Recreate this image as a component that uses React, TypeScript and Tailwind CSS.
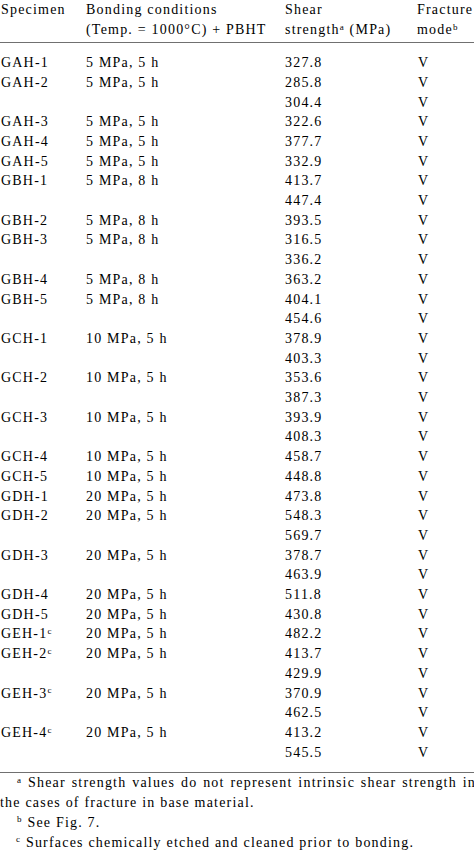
import React from 'react';

type Row = { spec?: string; note?: boolean; cond?: string; shear: string };

const rows: Row[] = [
  { spec: 'GAH-1', cond: '5 MPa, 5 h', shear: '327.8' },
  { spec: 'GAH-2', cond: '5 MPa, 5 h', shear: '285.8' },
  { shear: '304.4' },
  { spec: 'GAH-3', cond: '5 MPa, 5 h', shear: '322.6' },
  { spec: 'GAH-4', cond: '5 MPa, 5 h', shear: '377.7' },
  { spec: 'GAH-5', cond: '5 MPa, 5 h', shear: '332.9' },
  { spec: 'GBH-1', cond: '5 MPa, 8 h', shear: '413.7' },
  { shear: '447.4' },
  { spec: 'GBH-2', cond: '5 MPa, 8 h', shear: '393.5' },
  { spec: 'GBH-3', cond: '5 MPa, 8 h', shear: '316.5' },
  { shear: '336.2' },
  { spec: 'GBH-4', cond: '5 MPa, 8 h', shear: '363.2' },
  { spec: 'GBH-5', cond: '5 MPa, 8 h', shear: '404.1' },
  { shear: '454.6' },
  { spec: 'GCH-1', cond: '10 MPa, 5 h', shear: '378.9' },
  { shear: '403.3' },
  { spec: 'GCH-2', cond: '10 MPa, 5 h', shear: '353.6' },
  { shear: '387.3' },
  { spec: 'GCH-3', cond: '10 MPa, 5 h', shear: '393.9' },
  { shear: '408.3' },
  { spec: 'GCH-4', cond: '10 MPa, 5 h', shear: '458.7' },
  { spec: 'GCH-5', cond: '10 MPa, 5 h', shear: '448.8' },
  { spec: 'GDH-1', cond: '20 MPa, 5 h', shear: '473.8' },
  { spec: 'GDH-2', cond: '20 MPa, 5 h', shear: '548.3' },
  { shear: '569.7' },
  { spec: 'GDH-3', cond: '20 MPa, 5 h', shear: '378.7' },
  { shear: '463.9' },
  { spec: 'GDH-4', cond: '20 MPa, 5 h', shear: '511.8' },
  { spec: 'GDH-5', cond: '20 MPa, 5 h', shear: '430.8' },
  { spec: 'GEH-1', note: true, cond: '20 MPa, 5 h', shear: '482.2' },
  { spec: 'GEH-2', note: true, cond: '20 MPa, 5 h', shear: '413.7' },
  { shear: '429.9' },
  { spec: 'GEH-3', note: true, cond: '20 MPa, 5 h', shear: '370.9' },
  { shear: '462.5' },
  { spec: 'GEH-4', note: true, cond: '20 MPa, 5 h', shear: '413.2' },
  { shear: '545.5' },
];

const cols = 'grid grid-cols-[86px_199px_132px_1fr] whitespace-nowrap';

export default function App() {
  return (
    <div className="w-[474px] h-[860px] overflow-hidden bg-white text-black font-['Liberation_Serif','Times_New_Roman',serif] text-[14px] tracking-[1.2px]">
      <div className="w-[480px]">
        {/* header */}
        <div className={`${cols} leading-[20px]`}>
          <div className="pl-px">Specimen</div>
          <div>
            Bonding conditions
            <br />
            (Temp. = 1000°C) + PBHT
          </div>
          <div>
            Shear
            <br />
            strength<sup className="text-[9px]">a</sup> (MPa)
          </div>
          <div>
            Fracture
            <br />
            mode<sup className="text-[9px]">b</sup>
          </div>
        </div>
        <div className="mt-[1.5px] h-px bg-[#707070]" />

        {/* body */}
        <div className="pt-[10.6px] pb-[10px] leading-[19.71px]">
          {rows.map((r, i) => (
            <div key={i} className={cols}>
              <div className="pl-px">
                {r.spec}
                {r.note && <sup className="text-[9px]">c</sup>}
              </div>
              <div>{r.cond}</div>
              <div>{r.shear}</div>
              <div className="pl-px">V</div>
            </div>
          ))}
        </div>
        <div className="h-px bg-[#707070]" />

        {/* footnotes */}
        <div className="leading-[19.7px] w-[476px]">
          <p className="text-justify indent-[17px]">
            <sup className="text-[9px]">a</sup> Shear strength values do not represent intrinsic shear strength in the cases of fracture in base material.
          </p>
          <p className="pl-[17px]">
            <sup className="text-[9px]">b</sup> See Fig. 7.
          </p>
          <p className="pl-[16px]">
            <sup className="text-[9px]">c</sup> Surfaces chemically etched and cleaned prior to bonding.
          </p>
        </div>
      </div>
    </div>
  );
}
